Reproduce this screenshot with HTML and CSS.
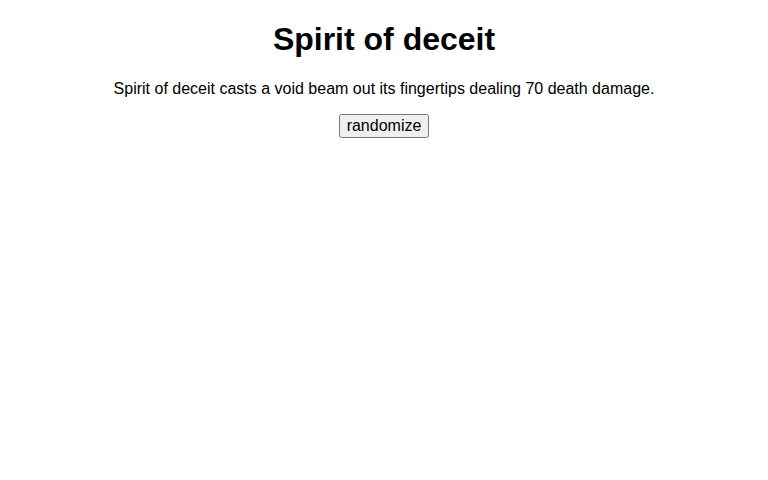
FILE: index.html
```html
<!DOCTYPE html>
<html lang="en">

<head>
    <meta charset="UTF-8">
    <meta name="viewport" content="width=device-width, initial-scale=1.0">
    <title>Spell Generator</title>
    <link rel="stylesheet" href="styles.css">
</head>

<body>
    <div class="spell">
        <h1 id="name">Spirit of deceit</h1>
        <p id="description">Spirit of deceit casts a void beam out its fingertips dealing 70 death damage.</p>
        <button id="randomize">randomize</button>
    </div>
</body>

</html>
```
FILE: styles.css
```css
body {
    margin: 0;
    font-family: "Liberation Sans", Arial, sans-serif;
    color: #000;
    background-color: #fff;
}

.spell {
    text-align: center;
}

#name {
    font-size: 32px;
}

#description {
    font-size: 16px;
}

#randomize {
    font-family: "Liberation Sans", Arial, sans-serif;
    font-size: 16px;
}
```
